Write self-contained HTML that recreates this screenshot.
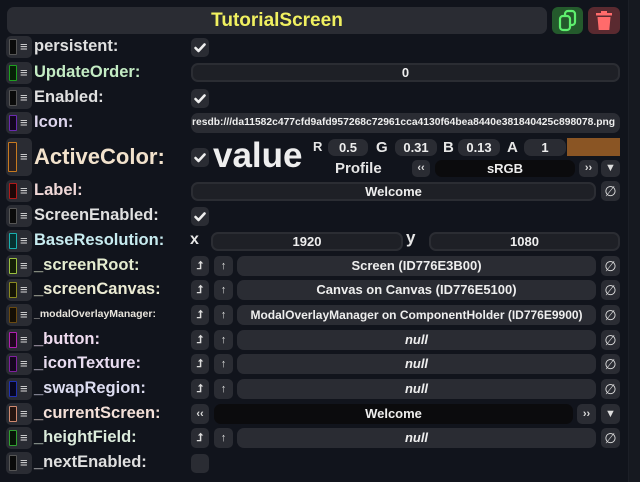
<!DOCTYPE html>
<html><head><meta charset="utf-8"><style>
*{box-sizing:border-box;margin:0;padding:0}
body{width:640px;height:482px;background:#11141c;font-family:"Liberation Sans",sans-serif;position:relative;overflow:hidden;color:#e6e6e6}
.a{position:absolute}
.strip{left:628px;top:0;width:12px;height:482px;background:#161920;border-left:1px solid #1c1f27}
.grip{left:6px;width:26px;height:22px;background:#2a2c33;border-radius:5px}
.grip i{position:absolute;left:3px;top:3px;width:8px;height:16px;border:1.5px solid #555;background:#0a0a0a;border-radius:1px}
.grip b{position:absolute;left:14px;top:3px;font-size:13px;color:#ddd;font-weight:bold}
.lbl{left:34px;font-weight:bold;font-size:16.5px;color:#e0e0e0;white-space:nowrap}
.btn{background:#2a2c33;border-radius:5px;color:#ddd;font-size:11px;font-weight:bold;text-align:center;height:20px;line-height:20px}
.chk{width:18px;height:19px;background:#2a2c33;border-radius:5px}
.fld{background:#2a2c33;border-radius:7px;height:20px;line-height:20px;text-align:center;font-size:13px;font-weight:bold;color:#eee;white-space:nowrap;overflow:hidden}
.vf{background:#1e2026;border:2px solid #2b2d33;border-radius:7px;height:19px;line-height:15px;text-align:center;font-size:13px;font-weight:bold;color:#eee}
.dk{background:#0b0b0d;border-radius:7px;height:20px;line-height:20px;text-align:center;font-size:13px;font-weight:bold;color:#eee}
.nl{font-style:italic}
.e{font-size:14px;font-weight:normal}
</style></head><body>
<div class="a strip"></div>
<div class="a" style="left:7px;top:7px;width:540px;height:27px;background:#2a2c33;border-radius:7px;text-align:center;line-height:27px;font-size:19px;font-weight:bold;color:#f0f060">TutorialScreen</div>
<div class="a" style="left:552px;top:7px;width:31px;height:27px;background:#245a2c;border-radius:6px">
<svg width="31" height="27"><rect x="13" y="4" width="10" height="14" rx="3" fill="none" stroke="#5ef06e" stroke-width="2.2"/><rect x="8" y="9" width="10" height="14" rx="3" fill="#245a2c" stroke="#5ef06e" stroke-width="2.2"/></svg></div>
<div class="a" style="left:588px;top:7px;width:32px;height:27px;background:#5a2a30;border-radius:6px">
<svg width="32" height="27"><rect x="8" y="6" width="16" height="2.5" fill="#ff6b6b"/><rect x="13" y="4" width="6" height="2" fill="#ff6b6b"/><path d="M9.5 10h13l-1.2 13h-10.6z" fill="#ff6b6b"/></svg></div>

<svg width="0" height="0" style="position:absolute"><defs><symbol id="ck" viewBox="0 0 18 19"><path d="M4.5 10l3 3 6-6.5" fill="none" stroke="#eee" stroke-width="2.6" stroke-linecap="round" stroke-linejoin="round"/></symbol></defs></svg>

<div class="a grip" style="top:36px"><i style="border-color:#555"></i><b>≡</b></div>
<div class="a grip" style="top:62px"><i style="border-color:#1ea020;background:#062006"></i><b>≡</b></div>
<div class="a grip" style="top:87px"><i></i><b>≡</b></div>
<div class="a grip" style="top:112px"><i style="border-color:#6a2ab0;background:#12061e"></i><b>≡</b></div>
<div class="a grip" style="top:138px;height:38px"><i style="top:4px;left:2px;width:9px;height:30px;border-color:#c87a20;background:#2a2020"></i><b style="top:11px">≡</b></div>
<div class="a grip" style="top:180px"><i style="border-color:#b01a1a;background:#1e0606"></i><b>≡</b></div>
<div class="a grip" style="top:205px"><i></i><b>≡</b></div>
<div class="a grip" style="top:230px"><i style="border-color:#1ab0b0;background:#063030"></i><b>≡</b></div>
<div class="a grip" style="top:255px"><i style="border-color:#9ac040;background:#141e06"></i><b>≡</b></div>
<div class="a grip" style="top:279px"><i style="border-color:#8a8a20;background:#141406"></i><b>≡</b></div>
<div class="a grip" style="top:304px"><i style="border-color:#6a4a10;background:#140e04"></i><b>≡</b></div>
<div class="a grip" style="top:329px"><i style="border-color:#b020b0;background:#1e061e"></i><b>≡</b></div>
<div class="a grip" style="top:353px"><i style="border-color:#8020a0;background:#14061e"></i><b>≡</b></div>
<div class="a grip" style="top:378px"><i style="border-color:#2030b0;background:#06061e"></i><b>≡</b></div>
<div class="a grip" style="top:403px"><i style="border-color:#d08a70;background:#241410"></i><b>≡</b></div>
<div class="a grip" style="top:427px"><i style="border-color:#30a030;background:#061406"></i><b>≡</b></div>
<div class="a grip" style="top:452px"><i></i><b>≡</b></div>

<div class="a lbl" style="top:37px">persistent:</div>
<div class="a lbl" style="top:63px;color:#c4ecc4">UpdateOrder:</div>
<div class="a lbl" style="top:88px">Enabled:</div>
<div class="a lbl" style="top:113px;color:#dcd4ec">Icon:</div>
<div class="a lbl" style="top:144px;font-size:22px;color:#f2e2cc">ActiveColor:</div>
<div class="a lbl" style="top:181px;color:#f0d8d8">Label:</div>
<div class="a lbl" style="top:206px">ScreenEnabled:</div>
<div class="a lbl" style="top:231px;color:#c8ecf0">BaseResolution:</div>
<div class="a lbl" style="top:256px;color:#e4ecd0">_screenRoot:</div>
<div class="a lbl" style="top:280px;color:#ececd4">_screenCanvas:</div>
<div class="a lbl" style="top:308px;font-size:10.5px;color:#e8e4dc">_modalOverlayManager:</div>
<div class="a lbl" style="top:330px;color:#f0dcf0">_button:</div>
<div class="a lbl" style="top:354px;color:#e8dcf0">_iconTexture:</div>
<div class="a lbl" style="top:379px;color:#dcdcf0">_swapRegion:</div>
<div class="a lbl" style="top:404px;color:#f4e0d8">_currentScreen:</div>
<div class="a lbl" style="top:428px;color:#dcecdc">_heightField:</div>
<div class="a lbl" style="top:453px">_nextEnabled:</div>

<svg class="a chk" style="left:191px;top:38px"><use href="#ck"/></svg>
<div class="a vf" style="left:191px;top:63px;width:429px">0</div>
<svg class="a chk" style="left:191px;top:89px"><use href="#ck"/></svg>
<div class="a fld" style="left:191px;top:113px;width:429px;font-size:10.3px;text-align:left;padding-left:1px">resdb:///da11582c477cfd9afd957268c72961cca4130f64bea8440e381840425c898078.png</div>

<svg class="a chk" style="left:191px;top:148px"><use href="#ck"/></svg>
<div class="a" style="left:213px;top:136px;font-size:35px;font-weight:bold;color:#eee">value</div>
<div class="a" style="left:313px;top:139px;font-size:13px;font-weight:bold">R</div>
<div class="a fld" style="left:328px;top:139px;width:40px;height:17px;line-height:17px">0.5</div>
<div class="a" style="left:376px;top:139px;font-size:15px;font-weight:bold">G</div>
<div class="a fld" style="left:395px;top:139px;width:42px;height:17px;line-height:17px">0.31</div>
<div class="a" style="left:443px;top:139px;font-size:15px;font-weight:bold">B</div>
<div class="a fld" style="left:458px;top:139px;width:42px;height:17px;line-height:17px">0.13</div>
<div class="a" style="left:507px;top:139px;font-size:15px;font-weight:bold">A</div>
<div class="a fld" style="left:524px;top:139px;width:42px;height:17px;line-height:17px">1</div>
<div class="a" style="left:567px;top:138px;width:53px;height:18px;background:#8a5524"></div>
<div class="a" style="left:335px;top:160px;font-size:15px;font-weight:bold">Profile</div>
<div class="a btn" style="left:412px;top:160px;width:18px;height:17px;line-height:17px">‹‹</div>
<div class="a dk" style="left:435px;top:160px;width:140px;height:17px;line-height:17px">sRGB</div>
<div class="a btn" style="left:579px;top:160px;width:19px;height:17px;line-height:17px">››</div>
<div class="a btn" style="left:601px;top:160px;width:19px;height:17px;line-height:17px">▼</div>

<div class="a vf" style="left:191px;top:182px;width:405px">Welcome</div>
<div class="a btn e" style="left:601px;top:181px;width:19px">∅</div>
<svg class="a chk" style="left:191px;top:207px"><use href="#ck"/></svg>
<div class="a" style="left:190px;top:231px;font-size:16px;font-weight:bold">x</div>
<div class="a vf" style="left:211px;top:232px;width:192px">1920</div>
<div class="a" style="left:406px;top:228px;font-size:17px;font-weight:bold">y</div>
<div class="a vf" style="left:429px;top:232px;width:191px">1080</div>

<div class="a btn" style="left:191px;top:256px;width:18px">⮥</div><div class="a btn" style="left:214px;top:256px;width:19px">↑</div>
<div class="a fld" style="left:237px;top:256px;width:359px">Screen (ID776E3B00)</div><div class="a btn e" style="left:601px;top:256px;width:19px">∅</div>
<div class="a btn" style="left:191px;top:280px;width:18px">⮥</div><div class="a btn" style="left:214px;top:280px;width:19px">↑</div>
<div class="a fld" style="left:237px;top:280px;width:359px">Canvas on Canvas (ID776E5100)</div><div class="a btn e" style="left:601px;top:280px;width:19px">∅</div>
<div class="a btn" style="left:191px;top:305px;width:18px">⮥</div><div class="a btn" style="left:214px;top:305px;width:19px">↑</div>
<div class="a fld" style="left:237px;top:305px;width:359px;font-size:12px">ModalOverlayManager on ComponentHolder (ID776E9900)</div><div class="a btn e" style="left:601px;top:305px;width:19px">∅</div>
<div class="a btn" style="left:191px;top:330px;width:18px">⮥</div><div class="a btn" style="left:214px;top:330px;width:19px">↑</div>
<div class="a fld nl" style="left:237px;top:330px;width:359px">null</div><div class="a btn e" style="left:601px;top:330px;width:19px">∅</div>
<div class="a btn" style="left:191px;top:354px;width:18px">⮥</div><div class="a btn" style="left:214px;top:354px;width:19px">↑</div>
<div class="a fld nl" style="left:237px;top:354px;width:359px">null</div><div class="a btn e" style="left:601px;top:354px;width:19px">∅</div>
<div class="a btn" style="left:191px;top:379px;width:18px">⮥</div><div class="a btn" style="left:214px;top:379px;width:19px">↑</div>
<div class="a fld nl" style="left:237px;top:379px;width:359px">null</div><div class="a btn e" style="left:601px;top:379px;width:19px">∅</div>
<div class="a btn" style="left:191px;top:404px;width:18px">‹‹</div>
<div class="a dk" style="left:214px;top:404px;width:359px">Welcome</div>
<div class="a btn" style="left:577px;top:404px;width:19px">››</div><div class="a btn" style="left:601px;top:404px;width:19px">▼</div>
<div class="a btn" style="left:191px;top:428px;width:18px">⮥</div><div class="a btn" style="left:214px;top:428px;width:19px">↑</div>
<div class="a fld nl" style="left:237px;top:428px;width:359px">null</div><div class="a btn e" style="left:601px;top:428px;width:19px">∅</div>
<div class="a chk" style="left:191px;top:454px"></div>
</body></html>
